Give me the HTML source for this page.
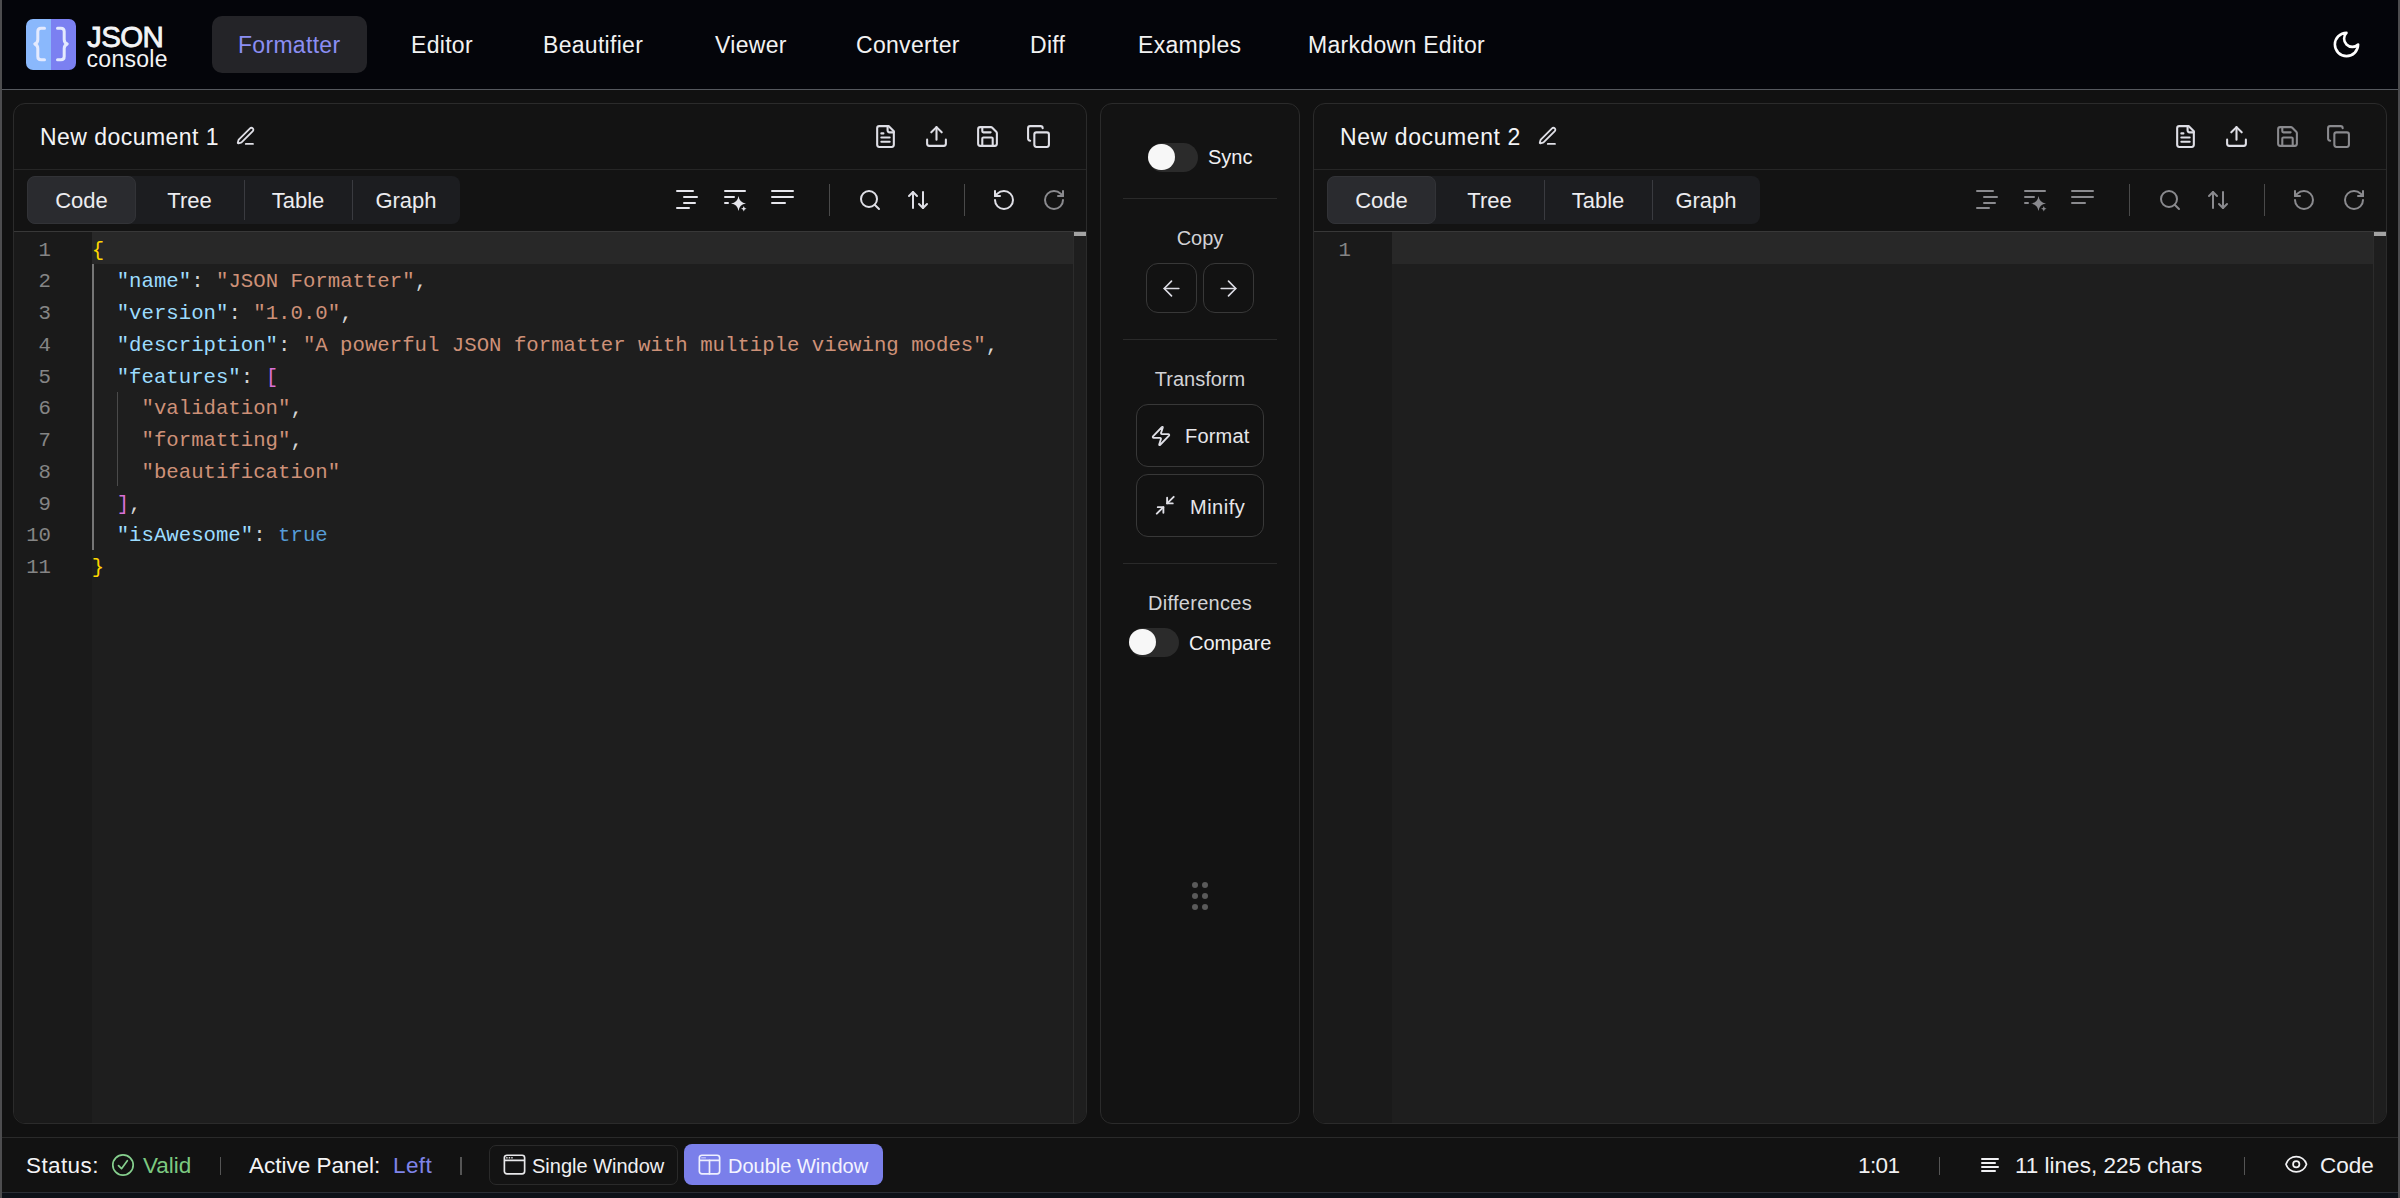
<!DOCTYPE html>
<html><head><meta charset="utf-8">
<style>
*{box-sizing:border-box;margin:0;padding:0}
html,body{width:2400px;height:1198px;overflow:hidden;background:#111111;font-family:"Liberation Sans",sans-serif;color:#f2f2f2}
.a{position:absolute}
.t{position:absolute;white-space:pre;line-height:1}
svg{position:absolute;overflow:visible}
.ic{fill:none;stroke:#dfdfe6;stroke-width:2;stroke-linecap:round;stroke-linejoin:round}
.dim{stroke:#8a8a8e}
.panel{position:absolute;top:103px;height:1021px;border:1px solid #2b2b2b;border-radius:12px;background:#131313;overflow:hidden}
.code{position:absolute;font-family:"Liberation Mono",monospace;font-size:20.7px;line-height:31.75px;height:31.75px;white-space:pre;color:#d4d4d4}
.ln{position:absolute;font-family:"Liberation Mono",monospace;font-size:20.7px;line-height:31.75px;height:31.75px;white-space:pre;color:#858585;text-align:right;width:60px}
.k{color:#9cdcfe}.s{color:#ce9178}.b1{color:#ffd700}.b2{color:#da70d6}.bo{color:#569cd6}
</style></head><body>
<div class="a" style="left:0;top:0;width:2px;height:1198px;background:#4d4d4f;z-index:5"></div>
<div class="a" style="left:2398px;top:0;width:2px;height:1198px;background:#4d4d4f;z-index:5"></div>
<div class="a" style="left:0;top:0;width:2400px;height:89px;background:#04050a"></div>
<div class="a" style="left:0;top:89px;width:2400px;height:1px;background:#55585e"></div>
<div class="a" style="left:25.5px;top:19px;width:50.5px;height:50.5px;border-radius:7px;overflow:hidden">
  <div class="a" style="left:0;top:0;width:25.5px;height:51px;background:#8ab8fc"></div>
  <div class="a" style="left:25.5px;top:0;width:25.5px;height:51px;background:#7b80f1"></div>
</div>
<svg style="left:0;top:0" width="100" height="90" viewBox="0 0 100 90"><g fill="none" stroke="#e4eafe" stroke-width="3" stroke-linecap="round" stroke-linejoin="round">
<path d="M44.5 28.3H41Q37.8 28.3 37.8 31.5V39.5Q37.8 42.8 34.8 44Q37.8 45.2 37.8 48.5V56.6Q37.8 59.8 41 59.8H44.5"/>
<path d="M57.5 28.3H61Q64.2 28.3 64.2 31.5V39.5Q64.2 42.8 67.2 44Q64.2 45.2 64.2 48.5V56.6Q64.2 59.8 61 59.8H57.5"/>
</g></svg>
<div class="t" style="left:87px;top:21.83px;font-size:29.5px;color:#f4f4f6;-webkit-text-stroke:0.8px #f4f4f6;letter-spacing:-0.6px">JSON</div>
<div class="t" style="left:86.5px;top:48.03px;font-size:23px;color:#f4f4f6;letter-spacing:0.3px">console</div>
<div class="a" style="left:212px;top:16px;width:155px;height:57px;border-radius:10px;background:#242428"></div>
<div class="t" style="left:238px;top:34.03px;font-size:23px;color:#8b8ef3;letter-spacing:0.3px">Formatter</div>
<div class="t" style="left:411px;top:34.03px;font-size:23px;letter-spacing:0.3px">Editor</div>
<div class="t" style="left:543px;top:34.03px;font-size:23px;letter-spacing:0.3px">Beautifier</div>
<div class="t" style="left:715px;top:34.03px;font-size:23px;letter-spacing:0.3px">Viewer</div>
<div class="t" style="left:856px;top:34.03px;font-size:23px;letter-spacing:0.3px">Converter</div>
<div class="t" style="left:1030px;top:34.03px;font-size:23px;letter-spacing:0.3px">Diff</div>
<div class="t" style="left:1138px;top:34.03px;font-size:23px;letter-spacing:0.3px">Examples</div>
<div class="t" style="left:1308px;top:34.03px;font-size:23px;letter-spacing:0.3px">Markdown Editor</div>
<svg style="left:2330.50px;top:29.00px;" width="31" height="31" viewBox="0 0 24 24"><g class="ic" style="stroke:#fff"><path d="M12 3a6 6 0 0 0 9 9 9 9 0 1 1-9-9Z"/></g></svg>
<div class="panel" style="left:13px;width:1074px">
<div class="a" style="left:0;top:65px;width:1072px;height:1px;background:#262626"></div>
<div class="a" style="left:0;top:127px;width:1072px;height:1px;background:#383838"></div>
<div class="a" style="left:0;top:128px;width:78px;height:900px;background:#1a1a1a"></div>
<div class="a" style="left:78px;top:128px;width:981px;height:900px;background:#1e1e1e"></div>
<div class="a" style="left:78px;top:128px;width:981px;height:32px;background:#282828"></div>
<div class="a" style="left:1059px;top:128px;width:13px;height:900px;background:#1e1e1e;border-left:1px solid #2c2c2c"></div>
<div class="a" style="left:1060px;top:128px;width:12px;height:4px;background:#a3a3a3"></div>
</div>
<div class="t" style="left:40px;top:126.03px;font-size:23px;color:#f4f4f6;letter-spacing:0.45px">New document 1</div>
<svg style="left:234.50px;top:125.00px;" width="22" height="22" viewBox="0 0 24 24"><g class="ic"><path d="M11.8 20.6h7.8"/><path d="M16.4 3.6a2.1 2.1 0 0 1 3 3L7.4 18.6a2 2 0 0 1-.86.5l-2.9.85a.5.5 0 0 1-.62-.62l.85-2.9a2 2 0 0 1 .5-.85z"/></g></svg>
<svg style="left:873.00px;top:123.75px;" width="25" height="25" viewBox="0 0 24 24"><g class="ic"><path d="M15 2H6a2 2 0 0 0-2 2v16a2 2 0 0 0 2 2h12a2 2 0 0 0 2-2V7Z"/><path d="M14 2v4a2 2 0 0 0 2 2h4"/><path d="M10 9H8"/><path d="M16 13H8"/><path d="M16 17H8"/></g></svg>
<svg style="left:924.00px;top:123.50px;" width="25" height="25" viewBox="0 0 24 24"><g class="ic"><path d="M21 15v4a2 2 0 0 1-2 2H5a2 2 0 0 1-2-2v-4"/><path d="M17 8 12 3 7 8"/><path d="M12 3v12"/></g></svg>
<svg style="left:975.00px;top:124.00px;" width="25" height="25" viewBox="0 0 24 24"><g class="ic"><path d="M15.2 3a2 2 0 0 1 1.4.6l3.8 3.8a2 2 0 0 1 .6 1.4V19a2 2 0 0 1-2 2H5a2 2 0 0 1-2-2V5a2 2 0 0 1 2-2z"/><path d="M17 21v-7a1 1 0 0 0-1-1H8a1 1 0 0 0-1 1v7"/><path d="M7 3v4a1 1 0 0 0 1 1h7"/></g></svg>
<svg style="left:1025.50px;top:123.50px;" width="25" height="25" viewBox="0 0 24 24"><g class="ic"><rect width="14" height="14" x="8" y="8" rx="2" ry="2"/><path d="M4 16c-1.1 0-2-.9-2-2V4c0-1.1.9-2 2-2h10c1.1 0 2 .9 2 2"/></g></svg>
<div class="a" style="left:27px;top:176px;width:433px;height:48px;border-radius:8px;background:#1c1d20"></div>
<div class="a" style="left:27px;top:176px;width:109px;height:48px;border-radius:8px;background:#2a2b2f;border:1px solid #323337"></div>
<div class="a" style="left:243.5px;top:180px;width:1px;height:40px;background:#3a3b40"></div>
<div class="a" style="left:352px;top:180px;width:1px;height:40px;background:#3a3b40"></div>
<div class="t" style="left:-118.5px;width:400px;text-align:center;top:189.88px;font-size:22px;color:#ececef;">Code</div>
<div class="t" style="left:-10.5px;width:400px;text-align:center;top:189.88px;font-size:22px;color:#ececef;">Tree</div>
<div class="t" style="left:98px;width:400px;text-align:center;top:189.88px;font-size:22px;color:#ececef;">Table</div>
<div class="t" style="left:206px;width:400px;text-align:center;top:189.88px;font-size:22px;color:#ececef;">Graph</div>
<div class="a" style="left:676px;top:190.25px;width:18px;height:2px;border-radius:1px;background:#e6e6ec"></div>
<div class="a" style="left:683px;top:196px;width:15px;height:2px;border-radius:1px;background:#e6e6ec"></div>
<div class="a" style="left:683px;top:201.5px;width:13px;height:2px;border-radius:1px;background:#e6e6ec"></div>
<div class="a" style="left:676px;top:207px;width:14px;height:2px;border-radius:1px;background:#e6e6ec"></div>
<div class="a" style="left:724px;top:190.25px;width:22px;height:2px;border-radius:1px;background:#e6e6ec"></div>
<div class="a" style="left:724px;top:196px;width:11px;height:2px;border-radius:1px;background:#e6e6ec"></div>
<div class="a" style="left:724px;top:201.5px;width:5px;height:2px;border-radius:1px;background:#e6e6ec"></div>
<svg style="left:731.0px;top:195.5px" width="15.0" height="15.0" viewBox="-1 -1 2 2"><path d="M0 -1 Q0.12 -0.12 1 0 Q0.12 0.12 0 1 Q-0.12 0.12 -1 0 Q-0.12 -0.12 0 -1Z" fill="#e6e6ec"/></svg>
<svg style="left:740.7px;top:205.7px" width="5.6" height="5.6" viewBox="-1 -1 2 2"><path d="M0 -1 Q0.12 -0.12 1 0 Q0.12 0.12 0 1 Q-0.12 0.12 -1 0 Q-0.12 -0.12 0 -1Z" fill="#e6e6ec"/></svg>
<div class="a" style="left:771px;top:190.25px;width:23px;height:2px;border-radius:1px;background:#e6e6ec"></div>
<div class="a" style="left:771px;top:196px;width:23px;height:2px;border-radius:1px;background:#e6e6ec"></div>
<div class="a" style="left:771px;top:201.5px;width:15px;height:2px;border-radius:1px;background:#e6e6ec"></div>
<div class="a" style="left:829px;top:184px;width:1px;height:32px;background:#4a4a4a"></div>
<svg style="left:857.50px;top:187.50px;" width="24" height="24" viewBox="0 0 24 24"><g class="ic"><circle cx="11" cy="11" r="8"/><path d="m21 21-4.3-4.3"/></g></svg>
<svg style="left:905.50px;top:187.50px;" width="24" height="24" viewBox="0 0 24 24"><g class="ic"><path d="m21 16-4 4-4-4"/><path d="M17 20V4"/><path d="m3 8 4-4 4 4"/><path d="M7 4v16"/></g></svg>
<div class="a" style="left:964px;top:184px;width:1px;height:32px;background:#4a4a4a"></div>
<svg style="left:991.50px;top:187.50px;" width="24" height="24" viewBox="0 0 24 24"><g class="ic"><path d="M3 12a9 9 0 1 0 9-9 9.75 9.75 0 0 0-6.74 2.74L3 8"/><path d="M3 3v5h5"/></g></svg>
<svg style="left:1041.50px;top:187.50px;" width="24" height="24" viewBox="0 0 24 24"><g class="ic dim"><path d="M21 12a9 9 0 1 1-9-9c2.52 0 4.93 1 6.74 2.74L21 8"/><path d="M21 3v5h-5"/></g></svg>
<div class="panel" style="left:1313px;width:1074px">
<div class="a" style="left:0;top:65px;width:1072px;height:1px;background:#262626"></div>
<div class="a" style="left:0;top:127px;width:1072px;height:1px;background:#383838"></div>
<div class="a" style="left:0;top:128px;width:78px;height:900px;background:#1a1a1a"></div>
<div class="a" style="left:78px;top:128px;width:981px;height:900px;background:#1e1e1e"></div>
<div class="a" style="left:78px;top:128px;width:981px;height:32px;background:#282828"></div>
<div class="a" style="left:1059px;top:128px;width:13px;height:900px;background:#1e1e1e;border-left:1px solid #2c2c2c"></div>
<div class="a" style="left:1060px;top:128px;width:12px;height:4px;background:#a3a3a3"></div>
</div>
<div class="t" style="left:1340px;top:126.03px;font-size:23px;color:#f4f4f6;letter-spacing:0.6px">New document 2</div>
<svg style="left:1537.00px;top:125.00px;" width="22" height="22" viewBox="0 0 24 24"><g class="ic"><path d="M11.8 20.6h7.8"/><path d="M16.4 3.6a2.1 2.1 0 0 1 3 3L7.4 18.6a2 2 0 0 1-.86.5l-2.9.85a.5.5 0 0 1-.62-.62l.85-2.9a2 2 0 0 1 .5-.85z"/></g></svg>
<svg style="left:2173.00px;top:123.75px;" width="25" height="25" viewBox="0 0 24 24"><g class="ic"><path d="M15 2H6a2 2 0 0 0-2 2v16a2 2 0 0 0 2 2h12a2 2 0 0 0 2-2V7Z"/><path d="M14 2v4a2 2 0 0 0 2 2h4"/><path d="M10 9H8"/><path d="M16 13H8"/><path d="M16 17H8"/></g></svg>
<svg style="left:2224.00px;top:123.50px;" width="25" height="25" viewBox="0 0 24 24"><g class="ic"><path d="M21 15v4a2 2 0 0 1-2 2H5a2 2 0 0 1-2-2v-4"/><path d="M17 8 12 3 7 8"/><path d="M12 3v12"/></g></svg>
<svg style="left:2275.00px;top:124.00px;" width="25" height="25" viewBox="0 0 24 24"><g class="ic dim"><path d="M15.2 3a2 2 0 0 1 1.4.6l3.8 3.8a2 2 0 0 1 .6 1.4V19a2 2 0 0 1-2 2H5a2 2 0 0 1-2-2V5a2 2 0 0 1 2-2z"/><path d="M17 21v-7a1 1 0 0 0-1-1H8a1 1 0 0 0-1 1v7"/><path d="M7 3v4a1 1 0 0 0 1 1h7"/></g></svg>
<svg style="left:2325.50px;top:123.50px;" width="25" height="25" viewBox="0 0 24 24"><g class="ic dim"><rect width="14" height="14" x="8" y="8" rx="2" ry="2"/><path d="M4 16c-1.1 0-2-.9-2-2V4c0-1.1.9-2 2-2h10c1.1 0 2 .9 2 2"/></g></svg>
<div class="a" style="left:1327px;top:176px;width:433px;height:48px;border-radius:8px;background:#1c1d20"></div>
<div class="a" style="left:1327px;top:176px;width:109px;height:48px;border-radius:8px;background:#2a2b2f;border:1px solid #323337"></div>
<div class="a" style="left:1543.5px;top:180px;width:1px;height:40px;background:#3a3b40"></div>
<div class="a" style="left:1652px;top:180px;width:1px;height:40px;background:#3a3b40"></div>
<div class="t" style="left:1181.5px;width:400px;text-align:center;top:189.88px;font-size:22px;color:#ececef;">Code</div>
<div class="t" style="left:1289.5px;width:400px;text-align:center;top:189.88px;font-size:22px;color:#ececef;">Tree</div>
<div class="t" style="left:1398px;width:400px;text-align:center;top:189.88px;font-size:22px;color:#ececef;">Table</div>
<div class="t" style="left:1506px;width:400px;text-align:center;top:189.88px;font-size:22px;color:#ececef;">Graph</div>
<div class="a" style="left:1976px;top:190.25px;width:18px;height:2px;border-radius:1px;background:#8a8a8e"></div>
<div class="a" style="left:1983px;top:196px;width:15px;height:2px;border-radius:1px;background:#8a8a8e"></div>
<div class="a" style="left:1983px;top:201.5px;width:13px;height:2px;border-radius:1px;background:#8a8a8e"></div>
<div class="a" style="left:1976px;top:207px;width:14px;height:2px;border-radius:1px;background:#8a8a8e"></div>
<div class="a" style="left:2024px;top:190.25px;width:22px;height:2px;border-radius:1px;background:#8a8a8e"></div>
<div class="a" style="left:2024px;top:196px;width:11px;height:2px;border-radius:1px;background:#8a8a8e"></div>
<div class="a" style="left:2024px;top:201.5px;width:5px;height:2px;border-radius:1px;background:#8a8a8e"></div>
<svg style="left:2031.0px;top:195.5px" width="15.0" height="15.0" viewBox="-1 -1 2 2"><path d="M0 -1 Q0.12 -0.12 1 0 Q0.12 0.12 0 1 Q-0.12 0.12 -1 0 Q-0.12 -0.12 0 -1Z" fill="#8a8a8e"/></svg>
<svg style="left:2040.7px;top:205.7px" width="5.6" height="5.6" viewBox="-1 -1 2 2"><path d="M0 -1 Q0.12 -0.12 1 0 Q0.12 0.12 0 1 Q-0.12 0.12 -1 0 Q-0.12 -0.12 0 -1Z" fill="#8a8a8e"/></svg>
<div class="a" style="left:2071px;top:190.25px;width:23px;height:2px;border-radius:1px;background:#8a8a8e"></div>
<div class="a" style="left:2071px;top:196px;width:23px;height:2px;border-radius:1px;background:#8a8a8e"></div>
<div class="a" style="left:2071px;top:201.5px;width:15px;height:2px;border-radius:1px;background:#8a8a8e"></div>
<div class="a" style="left:2129px;top:184px;width:1px;height:32px;background:#4a4a4a"></div>
<svg style="left:2157.50px;top:187.50px;" width="24" height="24" viewBox="0 0 24 24"><g class="ic dim"><circle cx="11" cy="11" r="8"/><path d="m21 21-4.3-4.3"/></g></svg>
<svg style="left:2205.50px;top:187.50px;" width="24" height="24" viewBox="0 0 24 24"><g class="ic dim"><path d="m21 16-4 4-4-4"/><path d="M17 20V4"/><path d="m3 8 4-4 4 4"/><path d="M7 4v16"/></g></svg>
<div class="a" style="left:2264px;top:184px;width:1px;height:32px;background:#4a4a4a"></div>
<svg style="left:2291.50px;top:187.50px;" width="24" height="24" viewBox="0 0 24 24"><g class="ic dim"><path d="M3 12a9 9 0 1 0 9-9 9.75 9.75 0 0 0-6.74 2.74L3 8"/><path d="M3 3v5h5"/></g></svg>
<svg style="left:2341.50px;top:187.50px;" width="24" height="24" viewBox="0 0 24 24"><g class="ic dim"><path d="M21 12a9 9 0 1 1-9-9c2.52 0 4.93 1 6.74 2.74L21 8"/><path d="M21 3v5h-5"/></g></svg>
<div class="a" style="left:92.39999999999999px;top:264px;width:2px;height:286px;background:#767676"></div>
<div class="a" style="left:117.03200000000001px;top:391.5px;width:1.3px;height:94px;background:#4a4a4a"></div>
<div class="ln" style="left:-9px;top:234.50px">1</div>
<div class="code" style="left:91.8px;top:234.50px"><span class="b1">{</span></div>
<div class="ln" style="left:-9px;top:266.25px">2</div>
<div class="code" style="left:91.8px;top:266.25px">  <span class="k">"name"</span>: <span class="s">"JSON Formatter"</span>,</div>
<div class="ln" style="left:-9px;top:298.00px">3</div>
<div class="code" style="left:91.8px;top:298.00px">  <span class="k">"version"</span>: <span class="s">"1.0.0"</span>,</div>
<div class="ln" style="left:-9px;top:329.75px">4</div>
<div class="code" style="left:91.8px;top:329.75px">  <span class="k">"description"</span>: <span class="s">"A powerful JSON formatter with multiple viewing modes"</span>,</div>
<div class="ln" style="left:-9px;top:361.50px">5</div>
<div class="code" style="left:91.8px;top:361.50px">  <span class="k">"features"</span>: <span class="b2">[</span></div>
<div class="ln" style="left:-9px;top:393.25px">6</div>
<div class="code" style="left:91.8px;top:393.25px">    <span class="s">"validation"</span>,</div>
<div class="ln" style="left:-9px;top:425.00px">7</div>
<div class="code" style="left:91.8px;top:425.00px">    <span class="s">"formatting"</span>,</div>
<div class="ln" style="left:-9px;top:456.75px">8</div>
<div class="code" style="left:91.8px;top:456.75px">    <span class="s">"beautification"</span></div>
<div class="ln" style="left:-9px;top:488.50px">9</div>
<div class="code" style="left:91.8px;top:488.50px">  <span class="b2">]</span>,</div>
<div class="ln" style="left:-9px;top:520.25px">10</div>
<div class="code" style="left:91.8px;top:520.25px">  <span class="k">"isAwesome"</span>: <span class="bo">true</span></div>
<div class="ln" style="left:-9px;top:552.00px">11</div>
<div class="code" style="left:91.8px;top:552.00px"><span class="b1">}</span></div>
<div class="ln" style="left:1291px;top:234.5px">1</div>
<div class="panel" style="left:1100px;width:200px"></div>
<div class="a" style="left:1148px;top:143px;width:50px;height:29px;border-radius:15px;background:#2b2b2b"></div>
<div class="a" style="left:1148px;top:143.5px;width:26.5px;height:26.5px;border-radius:13.25px;background:#f7f7f7"></div>
<div class="t" style="left:1208px;top:147.27px;font-size:20px;color:#f0f0f2;">Sync</div>
<div class="a" style="left:1123px;top:198px;width:154px;height:1px;background:#2a2a2a"></div>
<div class="t" style="left:1000px;width:400px;text-align:center;top:228.27px;font-size:20px;color:#d2d2d6;">Copy</div>
<div class="a" style="left:1146px;top:263px;width:51px;height:50px;border-radius:12px;border:1px solid #383838;background:#121212"></div>
<div class="a" style="left:1203px;top:263px;width:51px;height:50px;border-radius:12px;border:1px solid #383838;background:#121212"></div>
<svg style="left:1159.00px;top:275.50px;" width="25" height="25" viewBox="0 0 24 24"><g class="ic" style="stroke-width:1.6;stroke:#dcdce4"><path d="m12 19-7-7 7-7"/><path d="M19 12H5"/></g></svg>
<svg style="left:1216.00px;top:275.50px;" width="25" height="25" viewBox="0 0 24 24"><g class="ic" style="stroke-width:1.6;stroke:#dcdce4"><path d="M5 12h14"/><path d="m12 5 7 7-7 7"/></g></svg>
<div class="a" style="left:1123px;top:339px;width:154px;height:1px;background:#2a2a2a"></div>
<div class="t" style="left:1000px;width:400px;text-align:center;top:369.07px;font-size:20px;color:#d2d2d6;">Transform</div>
<div class="a" style="left:1136px;top:404px;width:128px;height:63px;border-radius:12px;border:1px solid #383838;background:#121212"></div>
<div class="a" style="left:1136px;top:474px;width:128px;height:63px;border-radius:12px;border:1px solid #383838;background:#121212"></div>
<svg style="left:1150.00px;top:424.50px;" width="22" height="22" viewBox="0 0 24 24"><g class="ic"><path d="M4 14a1 1 0 0 1-.78-1.63l9.9-10.2a.5.5 0 0 1 .86.46l-1.92 6.02A1 1 0 0 0 13 10h7a1 1 0 0 1 .78 1.63l-9.9 10.2a.5.5 0 0 1-.86-.46l1.92-6.02A1 1 0 0 0 11 14z"/></g></svg>
<div class="t" style="left:1185px;top:426.27px;font-size:20px;color:#e6e6ea;letter-spacing:0.2px">Format</div>
<svg style="left:1154.25px;top:494.25px;" width="22.5" height="22.5" viewBox="0 0 24 24"><g class="ic"><path d="M4 14h6v6"/><path d="M20 10h-6V4"/><path d="M14 10l7-7"/><path d="M3 21l7-7"/></g></svg>
<div class="t" style="left:1190px;top:496.57px;font-size:20px;color:#e6e6ea;letter-spacing:0.5px">Minify</div>
<div class="a" style="left:1123px;top:563px;width:154px;height:1px;background:#2a2a2a"></div>
<div class="t" style="left:1000px;width:400px;text-align:center;top:593.37px;font-size:20px;color:#d2d2d6;letter-spacing:0.3px">Differences</div>
<div class="a" style="left:1129px;top:628px;width:50px;height:29px;border-radius:15px;background:#2b2b2b"></div>
<div class="a" style="left:1129px;top:628.5px;width:26.5px;height:26.5px;border-radius:13.25px;background:#f7f7f7"></div>
<div class="t" style="left:1189px;top:633.07px;font-size:20px;color:#f0f0f2;">Compare</div>
<div class="a" style="left:1192.2px;top:882px;width:6px;height:6px;border-radius:3px;background:#5a5a5a"></div>
<div class="a" style="left:1192.2px;top:893px;width:6px;height:6px;border-radius:3px;background:#5a5a5a"></div>
<div class="a" style="left:1192.2px;top:904px;width:6px;height:6px;border-radius:3px;background:#5a5a5a"></div>
<div class="a" style="left:1201.8px;top:882px;width:6px;height:6px;border-radius:3px;background:#5a5a5a"></div>
<div class="a" style="left:1201.8px;top:893px;width:6px;height:6px;border-radius:3px;background:#5a5a5a"></div>
<div class="a" style="left:1201.8px;top:904px;width:6px;height:6px;border-radius:3px;background:#5a5a5a"></div>
<div class="a" style="left:0;top:1137px;width:2400px;height:1px;background:#2a2a2a"></div>
<div class="a" style="left:0;top:1138px;width:2400px;height:54px;background:#121212"></div>
<div class="a" style="left:0;top:1192px;width:2400px;height:1px;background:#2b2e35"></div>
<div class="a" style="left:0;top:1193px;width:2400px;height:5px;background:#0d1118"></div>
<div class="t" style="left:26px;top:1155.45px;font-size:22.5px;color:#f4f4f6;letter-spacing:0.4px">Status:</div>
<svg style="left:111.00px;top:1153.00px;" width="24" height="24" viewBox="0 0 24 24"><g class="ic" style="stroke:#86d08e;stroke-width:1.7"><circle cx="12" cy="12" r="10.2"/><path d="M7.5 12.7l3 3 5.8-8"/></g></svg>
<div class="t" style="left:143px;top:1155.45px;font-size:22.5px;color:#7cc981;">Valid</div>
<div class="a" style="left:219.5px;top:1157px;width:1.5px;height:18px;background:#555"></div>
<div class="t" style="left:249px;top:1155.45px;font-size:22.5px;color:#f4f4f6;">Active Panel:</div>
<div class="t" style="left:393px;top:1155.45px;font-size:22.5px;color:#7f84e8;letter-spacing:0.4px">Left</div>
<div class="a" style="left:460px;top:1157px;width:1.5px;height:18px;background:#555"></div>
<div class="a" style="left:489px;top:1145px;width:189px;height:40px;border-radius:7px;border:1px solid #2a2a2a;background:#131313"></div>
<svg style="left:500.70px;top:1151.40px;" width="27" height="27" viewBox="0 0 24 24"><g class="ic" style="stroke-width:1.5;stroke:#e8e8ea"><path d="M3 8.25V18a2.25 2.25 0 0 0 2.25 2.25h13.5A2.25 2.25 0 0 0 21 18V8.25m-18 0V6a2.25 2.25 0 0 1 2.25-2.25h13.5A2.25 2.25 0 0 1 21 6v2.25m-18 0h18"/><path d="M5.25 6h.01M7.5 6h.01M9.75 6h.01"/></g></svg>
<div class="t" style="left:532px;top:1155.57px;font-size:20px;color:#f0f0f2;">Single Window</div>
<div class="a" style="left:684px;top:1144px;width:199px;height:41px;border-radius:8px;background:#7a7fea"></div>
<svg style="left:695.90px;top:1151.40px;" width="27" height="27" viewBox="0 0 24 24"><g class="ic" style="stroke-width:1.5;stroke:#eef0ff"><path d="M3 8.25V18a2.25 2.25 0 0 0 2.25 2.25h13.5A2.25 2.25 0 0 0 21 18V8.25m-18 0V6a2.25 2.25 0 0 1 2.25-2.25h13.5A2.25 2.25 0 0 1 21 6v2.25m-18 0h18"/><path d="M12 8.25v12"/><path d="M5.25 6h3" style="opacity:.5"/></g></svg>
<div class="t" style="left:728px;top:1155.57px;font-size:20px;color:#f4f4ff;">Double Window</div>
<div class="t" style="left:1858px;top:1155.45px;font-size:22.5px;color:#f0f0f2;letter-spacing:-0.6px">1:01</div>
<div class="a" style="left:1938.5px;top:1157px;width:1.5px;height:18px;background:#555"></div>
<div class="a" style="left:1981.3px;top:1158px;width:18.1px;height:2px;border-radius:1px;background:#f0f0f2"></div>
<div class="a" style="left:1981.3px;top:1162px;width:14.6px;height:2px;border-radius:1px;background:#f0f0f2"></div>
<div class="a" style="left:1981.3px;top:1166px;width:18.1px;height:2px;border-radius:1px;background:#f0f0f2"></div>
<div class="a" style="left:1981.3px;top:1170px;width:14.6px;height:2px;border-radius:1px;background:#f0f0f2"></div>
<div class="t" style="left:2015px;top:1155.45px;font-size:22.5px;color:#f0f0f2;">11 lines, 225 chars</div>
<div class="a" style="left:2243.5px;top:1157px;width:1.5px;height:18px;background:#555"></div>
<svg style="left:2283.75px;top:1152.45px;" width="24.5" height="24.5" viewBox="0 0 24 24"><g class="ic" style="stroke-width:1.7;stroke:#f2f2f4"><path d="M2.036 12.322a1.012 1.012 0 0 1 0-.639C3.423 7.51 7.36 4.5 12 4.5c4.638 0 8.573 3.007 9.963 7.178.07.207.07.431 0 .639C20.577 16.49 16.64 19.5 12 19.5c-4.638 0-8.573-3.007-9.963-7.178Z"/><circle cx="12" cy="12" r="3.1"/></g></svg>
<div class="t" style="left:2320px;top:1155.45px;font-size:22.5px;color:#f0f0f2;">Code</div>
</body></html>
